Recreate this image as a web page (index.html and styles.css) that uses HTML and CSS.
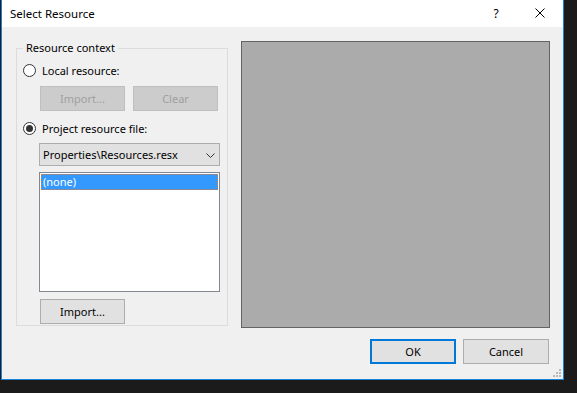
FILE: index.html
```html
<!DOCTYPE html>
<html>
<head>
<meta charset="utf-8">
<link rel="stylesheet" href="styles.css">
</head>
<body>
<div class="window">
  <div class="titlebar">
    <span class="title">Select Resource</span>
    <div class="caption-btns">
      <span class="cap help">?</span>
      <span class="cap close"><svg width="10" height="10" viewBox="0 0 10 10"><path d="M0.5 0.5 L9.5 9.5 M9.5 0.5 L0.5 9.5" stroke="#000" stroke-width="1" fill="none"/></svg></span>
    </div>
  </div>
  <div class="client">
    <div class="main">
      <fieldset class="group">
        <legend>Resource context</legend>
        <label class="radio-row"><span class="radio"></span>Local resource:</label>
        <div class="btn-row">
          <button class="btn" disabled>Import...</button>
          <button class="btn" disabled>Clear</button>
        </div>
        <label class="radio-row second"><span class="radio checked"></span>Project resource file:</label>
        <div class="combo">
          <span class="combo-text">Properties\Resources.resx</span>
          <svg class="chev" width="9" height="5" viewBox="0 0 9 5"><path d="M0.5 0.5 L4.5 4.5 L8.5 0.5" stroke="#333" stroke-width="1" fill="none"/></svg>
        </div>
        <div class="listbox">
          <div class="item selected">(none)</div>
        </div>
        <button class="btn import2">Import...</button>
      </fieldset>
      <div class="preview"></div>
    </div>
    <div class="footer">
      <button class="btn wide ok">OK</button>
      <button class="btn wide">Cancel</button>
    </div>
  </div>
  <svg class="grip" width="9" height="9" viewBox="0 0 9 9">
    <rect x="6" y="0" width="2" height="2" fill="#b8b8b8"/>
    <rect x="3" y="3" width="2" height="2" fill="#b8b8b8"/>
    <rect x="6" y="3" width="2" height="2" fill="#b8b8b8"/>
    <rect x="0" y="6" width="2" height="2" fill="#b8b8b8"/>
    <rect x="3" y="6" width="2" height="2" fill="#b8b8b8"/>
    <rect x="6" y="6" width="2" height="2" fill="#b8b8b8"/>
  </svg>
</div>
</body>
</html>
```
FILE: styles.css
```css
html, body {
  margin: 0;
  padding: 0;
  background: #1b1b1b;
}
body {
  font-family: "Noto Sans", "Open Sans", sans-serif;
  font-size: 11px;
  color: #000;
}
.window {
  position: relative;
  margin-left: 1px;
  width: 563px;
  height: 380px;
  box-sizing: border-box;
  border: 1px solid #1883d7;
  border-top: none;
  background: #f0f0f0;
  display: flex;
  flex-direction: column;
}
.titlebar {
  height: 27px;
  background: #fff;
  display: flex;
  align-items: center;
  padding-left: 8px;
  flex: none;
}
.title {
  font-size: 11.5px;
  line-height: 14px;
}
.caption-btns {
  margin-left: auto;
  display: flex;
  height: 27px;
}
.cap {
  width: 46px;
  height: 27px;
  display: flex;
  align-items: center;
  justify-content: center;
}
.help {
  font-size: 12px;
  padding-left: 4px;
  box-sizing: border-box;
}
.close svg {
  display: block;
  margin-top: -2px;
}
.client {
  flex: 1;
  padding: 14px 13px 0 14px;
  display: flex;
  flex-direction: column;
}
.main {
  display: flex;
  align-items: flex-start;
  gap: 13px;
}
.group {
  margin: 0;
  width: 212px;
  min-width: 0;
  box-sizing: border-box;
  padding: 7px 6px 1px 6px;
  border: 1px solid #dcdcdc;
  display: flex;
  flex-direction: column;
  align-items: flex-start;
}
.group legend {
  padding: 0 3px;
  line-height: 14px;
  font-size: 11px;
}
.radio-row {
  display: flex;
  align-items: center;
  gap: 6px;
  height: 17px;
  line-height: 14px;
}
.radio-row.second {
  margin-top: 9px;
}
.radio {
  width: 13px;
  height: 13px;
  box-sizing: border-box;
  border: 1px solid #333;
  border-radius: 50%;
  background: #fff;
  display: flex;
  align-items: center;
  justify-content: center;
}
.radio.checked::after {
  content: "";
  width: 7px;
  height: 7px;
  border-radius: 50%;
  background: #333;
}
.btn {
  font-family: inherit;
  font-size: 11px;
  color: #000;
  height: 25px;
  width: 85px;
  box-sizing: border-box;
  border: 1px solid #adadad;
  background: #e1e1e1;
  padding: 0;
  margin: 0;
}
.btn:disabled {
  background: #cccccc;
  border-color: #bfbfbf;
  color: #a0a0a0;
}
.btn-row {
  display: flex;
  gap: 8px;
  margin-top: 7px;
  margin-left: 17px;
}
.combo {
  margin-top: 6px;
  margin-left: 16px;
  width: 181px;
  height: 23px;
  box-sizing: border-box;
  border: 1px solid #adadad;
  background: #e1e1e1;
  display: flex;
  align-items: center;
  padding-left: 3px;
  padding-right: 4px;
}
.combo-text {
  flex: 1;
  line-height: 14px;
}
.chev {
  display: block;
  margin-top: 1px;
}
.listbox {
  margin-top: 6px;
  margin-left: 16px;
  width: 181px;
  height: 120px;
  box-sizing: border-box;
  border: 1px solid #828790;
  background: #fff;
  padding: 1px;
}
.item {
  height: 16px;
  box-sizing: border-box;
  line-height: 14px;
  padding-left: 1px;
}
.item.selected {
  background: #3399ff;
  color: #fff;
  border: 1px dotted #e0782a;
}
.import2 {
  margin-top: 7px;
  margin-left: 17px;
}
.preview {
  width: 309px;
  height: 287px;
  box-sizing: border-box;
  border: 1px solid #646464;
  background: #ababab;
}
.footer {
  display: flex;
  justify-content: flex-end;
  gap: 7px;
  margin-top: 11px;
  margin-right: 1px;
}
.btn.wide {
  width: 86px;
}
.btn.ok {
  border: 2px solid #0078d7;
}
.grip {
  position: absolute;
  right: 1px;
  bottom: 1px;
  display: block;
}
```
